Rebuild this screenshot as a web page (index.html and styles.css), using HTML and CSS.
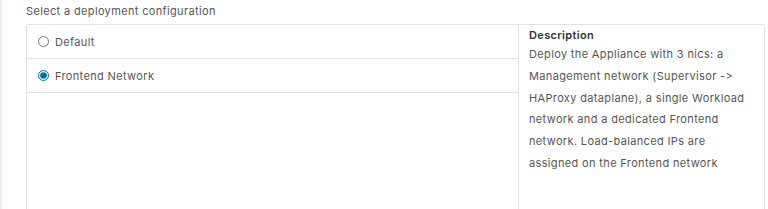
FILE: index.html
```html
<!DOCTYPE html>
<html lang="en">
<head>
    <meta charset="UTF-8">
    <title>Deployment Configuration</title>
    <link rel="stylesheet" href="styles.css">
</head>
<body>
    <div class="page">
        <div class="field-label">Select a deployment configuration</div>
        <div class="config-box">
            <div class="config-list">
                <label class="config-row">
                    <input type="radio" name="config" value="default">
                    <span>Default</span>
                </label>
                <label class="config-row">
                    <input type="radio" name="config" value="frontend" checked>
                    <span>Frontend Network</span>
                </label>
            </div>
            <div class="config-desc">
                <h4>Description</h4>
                <p>Deploy the Appliance with 3 nics: a Management network (Supervisor -&gt; HAProxy dataplane), a single Workload network and a dedicated Frontend network. Load-balanced IPs are assigned on the Frontend network</p>
            </div>
        </div>
    </div>
</body>
</html>
```

FILE: styles.css
```css
/* General */
body {
    margin: 0;
    font-family: Inter, "Open Sans", sans-serif;
    color: #565656;
    background-color: #fff;
    letter-spacing: 0.35px;
}

.page {
    height: 209px;
    box-sizing: border-box;
    border-left: 2px solid #ececec;
    padding: 4px 3px 0 24px;
    overflow: hidden;
}

.field-label {
    font-size: 11px;
    line-height: 15px;
    margin-bottom: 5px;
}

/* Box */
.config-box {
    display: flex;
    height: 200px;
    border: 1px solid #e2e2e2;
    border-radius: 3px 3px 0 0;
}

.config-list {
    flex: 1;
    border-right: 1px solid #e2e2e2;
}

.config-row {
    display: flex;
    align-items: center;
    height: 33px;
    padding-left: 11px;
    border-bottom: 1px solid #e2e2e2;
    font-size: 11px;
}

.config-row input {
    margin: 0 6px 0 0;
    width: 11px;
    height: 11px;
    accent-color: #0072a3;
}

/* Description */
.config-desc {
    width: 245px;
    box-sizing: border-box;
    padding: 1px 10px 0 10px;
}

.config-desc h4 {
    margin: 0;
    font-size: 11px;
    font-weight: 600;
    color: #333;
    line-height: 18px;
}

.config-desc p {
    margin: 0;
    font-size: 11px;
    line-height: 21.8px;
}
```
